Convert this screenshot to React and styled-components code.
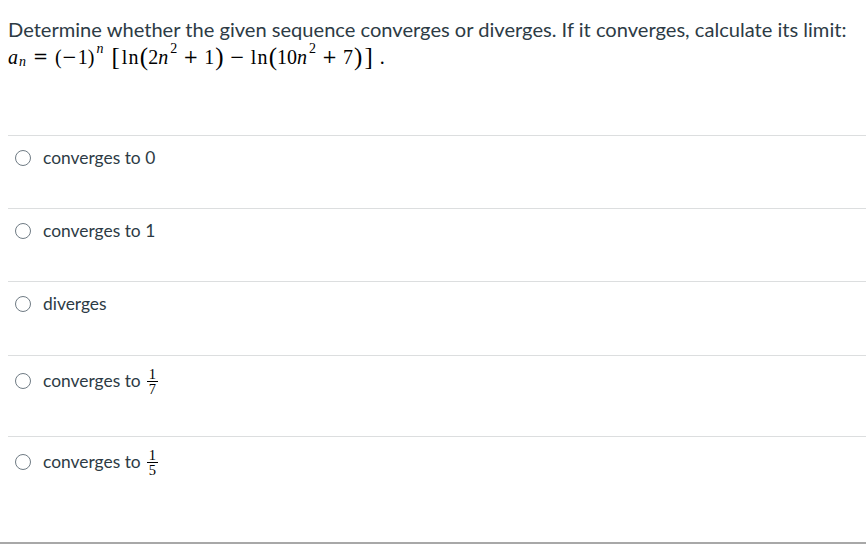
import React from "react";
import styled, { createGlobalStyle } from "styled-components";

const Global = createGlobalStyle`
  html, body { margin: 0; padding: 0; background: #fff; }
  body { font-family: Lato, "Noto Sans", sans-serif; color: #2d3b45; }
`;

const Page = styled.div`
  width: 866px;
  height: 545px;
  display: flex;
  flex-direction: column;
  overflow: hidden;
`;

const Question = styled.div`
  padding: 16px 0 0 8px;
  font-size: 20.1px;
  line-height: 26px;
  color: #2d3b45;
`;

const MathLine = styled.div`
  font-family: "Liberation Serif", "DejaVu Serif", serif;
  font-size: 20px;
  line-height: 30px;
  color: #000;
  display: flex;
  align-items: center;
  white-space: pre;
`;

const I = styled.span`
  font-style: italic;
  margin-left: ${(p) => p.$ml || 0}px;
`;

const N = styled.span`
  margin-left: ${(p) => p.$ml || 0}px;
  letter-spacing: ${(p) => p.$ls || 0}px;
`;

const Sub = styled.span`
  font-size: 14px;
  font-style: italic;
  position: relative;
  top: 5px;
  margin-left: 1px;
`;

const Sup = styled.span`
  font-size: 14px;
  font-style: ${(p) => (p.$italic ? "italic" : "normal")};
  position: relative;
  top: -8px;
  margin-left: 2px;
`;

const Op = styled.span`
  font-family: "DejaVu Serif", serif;
  font-weight: 300;
  font-size: 18px;
  margin: 0 ${(p) => p.$gap ?? 6}px;
`;

const Minus = styled.span`
  font-family: "DejaVu Serif", serif;
  font-size: 18px;
  margin: 0 1px 0 0;
`;

const Big = styled.span`
  font-size: ${(p) => p.$size || 25}px;
  line-height: 1;
  position: relative;
  top: -1px;
  margin-left: ${(p) => p.$ml || 0}px;
  margin-right: ${(p) => p.$mr || 0}px;
`;

const Options = styled.div`
  margin-top: 63px;
  padding-left: 8px;
  flex: 1;
  display: flex;
  flex-direction: column;
`;

const Option = styled.label`
  display: flex;
  border-top: 1px solid #dcdedf;
  padding: 9px 0 0 7px;
  height: ${(p) => p.$h}px;
  box-sizing: border-box;
  align-items: flex-start;
`;

const OptionInner = styled.div`
  display: flex;
  align-items: center;
  gap: 12px;
  height: ${(p) => (p.$frac ? 32 : 26)}px;
`;

const Radio = styled.span`
  width: 14px;
  height: 14px;
  border: 1px solid #6f7b84;
  border-radius: 50%;
  box-sizing: content-box;
  flex: none;
`;

const Text = styled.span`
  font-size: 17.4px;
  line-height: 26px;
  color: #2d3b45;
  display: flex;
  align-items: center;
  gap: 6px;
`;

const Frac = styled.span`
  display: inline-flex;
  flex-direction: column;
  align-items: center;
  font-family: "Liberation Serif", "DejaVu Serif", serif;
  font-size: 14.5px;
  line-height: 12px;
  color: #000;
`;

const Num = styled.span`
  padding: 0 2px 1px;
  border-bottom: 1px solid #000;
`;

const Den = styled.span`
  padding-top: 1px;
`;

const BottomRule = styled.div`
  height: 2px;
  background: #a8a8a8;
  margin-bottom: 1px;
`;

const options = [
  { label: "converges to 0", h: 73 },
  { label: "converges to 1", h: 73 },
  { label: "diverges", h: 74 },
  { label: "converges to", frac: ["1", "7"], h: 81 },
  { label: "converges to", frac: ["1", "5"], h: 106 },
];

export default function App() {
  return (
    <Page>
      <Global />
      <Question>
        Determine whether the given sequence converges or diverges. If it converges, calculate its limit:
        <MathLine>
          <I>a</I>
          <Sub>n</Sub>
          <Op $gap={7}>=</Op>
          <N>(</N>
          <Minus>−</Minus>
          <N>1)</N>
          <Sup $italic>n</Sup>
          <Big $ml={8} $mr={2}>[</Big>
          <N $ls={1.2}>ln</N>
          <Big>(</Big>
          <N>2</N>
          <I>n</I>
          <Sup>2</Sup>
          <Op>+</Op>
          <N>1</N>
          <Big $ml={1}>)</Big>
          <Op>−</Op>
          <N $ls={1.2}>ln</N>
          <Big>(</Big>
          <N>10</N>
          <I>n</I>
          <Sup>2</Sup>
          <Op>+</Op>
          <N>7</N>
          <Big $ml={1}>)</Big>
          <Big $ml={2}>]</Big>
          <N $ml={7}>.</N>
        </MathLine>
      </Question>
      <Options>
        {options.map((o, i) => (
          <Option key={i} $h={o.h}>
            <OptionInner $frac={!!o.frac}>
              <Radio />
              <Text>
                {o.label}
                {o.frac && (
                  <Frac>
                    <Num>{o.frac[0]}</Num>
                    <Den>{o.frac[1]}</Den>
                  </Frac>
                )}
              </Text>
            </OptionInner>
          </Option>
        ))}
      </Options>
      <BottomRule />
    </Page>
  );
}
